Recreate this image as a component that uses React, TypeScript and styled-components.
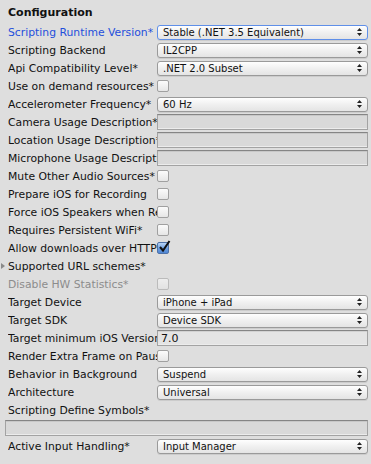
import React from "react";
import styled, { createGlobalStyle } from "styled-components";

const GlobalStyle = createGlobalStyle`
  body {
    margin: 0;
    background: #dedede;
    font-family: "DejaVu Sans", "Liberation Sans", sans-serif;
  }
`;

const Panel = styled.div`
  width: 371px;
  height: 464px;
  box-sizing: border-box;
  padding: 4px 3px 0 0;
  background: #dedede;
  overflow: hidden;
`;

const Title = styled.div`
  height: 18px;
  line-height: 18px;
  margin-bottom: 1px;
  padding-left: 8px;
  font-size: 11px;
  font-weight: bold;
  color: #111;
`;

const Row = styled.div`
  display: grid;
  grid-template-columns: 149px 1fr;
  align-items: center;
  height: 18px;
  padding-left: 8px;
  position: relative;
`;

const FullRow = styled.div`
  display: flex;
  align-items: center;
  height: 18px;
  padding-left: 5px;
`;

const Label = styled.div<{ $tone?: "focus" | "disabled" }>`
  font-size: 10.8px;
  white-space: nowrap;
  overflow: hidden;
  color: ${(p) =>
    p.$tone === "focus" ? "#1f4fdc" : p.$tone === "disabled" ? "#8c8c8c" : "#111"};
`;

const Foldout = styled.span`
  position: absolute;
  left: 1px;
  top: 6px;
  width: 0;
  height: 0;
  border-top: 3px solid transparent;
  border-bottom: 3px solid transparent;
  border-left: 4px solid #8a8a8a;
`;

const Select = styled.div<{ $focused?: boolean }>`
  height: 15px;
  box-sizing: border-box;
  display: flex;
  align-items: center;
  justify-content: space-between;
  padding: 0 5px;
  border: 1px solid ${(p) => (p.$focused ? "#5f8fe8" : "#9a9a9a")};
  border-radius: 3px;
  background: linear-gradient(#fefefe, #f0f0f0 50%, #e4e4e4);
  box-shadow: 0 1px 0 rgba(0, 0, 0, 0.08);
  font-size: 10px;
  color: #111;
`;

const Arrows = () => (
  <svg width="5" height="8" viewBox="0 0 5 8">
    <path d="M2.5 0 L5 3 L0 3 Z M0 5 L5 5 L2.5 8 Z" fill="#222" />
  </svg>
);

const TextField = styled.div<{ $light?: boolean }>`
  height: 16px;
  box-sizing: border-box;
  display: flex;
  align-items: center;
  padding-left: 3px;
  width: 100%;
  border: 1px solid #a3a3a3;
  border-top-color: #858585;
  background: ${(p) => (p.$light ? "#e4e4e4" : "#d9d9d9")};
  box-shadow: inset 0 1px 0 rgba(0, 0, 0, 0.08), inset 0 -1px 0 #ececec;
  font-size: 11px;
  color: #111;
`;

const Check = styled.div<{ $checked?: boolean; $disabled?: boolean }>`
  position: relative;
  width: 12px;
  height: 12px;
  box-sizing: border-box;
  border: 1px solid ${(p) => (p.$checked ? "#4f72a8" : "#a0a0a0")};
  border-radius: 2px;
  background: ${(p) =>
    p.$checked
      ? "linear-gradient(#b9d4f5, #6c9fe0 55%, #4f86d4)"
      : "linear-gradient(#fbfbfb, #e6e6e6)"};
  opacity: ${(p) => (p.$disabled ? 0.55 : 1)};
`;

const CheckMark = () => (
  <svg
    width="13"
    height="13"
    viewBox="0 0 13 13"
    style={{ position: "absolute", left: 0, top: -3 }}
  >
    <path d="M2 7 L5 10.5 L11.5 1" stroke="#111" strokeWidth="2" fill="none" />
  </svg>
);

type Item =
  | { kind: "select"; label: string; value: string; focused?: boolean }
  | { kind: "check"; label: string; checked?: boolean; disabled?: boolean }
  | { kind: "text"; label: string; value?: string; light?: boolean }
  | { kind: "label"; label: string; foldout?: boolean };

const items: Item[] = [
  { kind: "select", label: "Scripting Runtime Version*", value: "Stable (.NET 3.5 Equivalent)", focused: true },
  { kind: "select", label: "Scripting Backend", value: "IL2CPP" },
  { kind: "select", label: "Api Compatibility Level*", value: ".NET 2.0 Subset" },
  { kind: "check", label: "Use on demand resources*" },
  { kind: "select", label: "Accelerometer Frequency*", value: "60 Hz" },
  { kind: "text", label: "Camera Usage Description*" },
  { kind: "text", label: "Location Usage Description*" },
  { kind: "text", label: "Microphone Usage Description*" },
  { kind: "check", label: "Mute Other Audio Sources*" },
  { kind: "check", label: "Prepare iOS for Recording" },
  { kind: "check", label: "Force iOS Speakers when Recording" },
  { kind: "check", label: "Requires Persistent WiFi*" },
  { kind: "check", label: "Allow downloads over HTTP*", checked: true },
  { kind: "label", label: "Supported URL schemes*", foldout: true },
  { kind: "check", label: "Disable HW Statistics*", disabled: true },
  { kind: "select", label: "Target Device", value: "iPhone + iPad" },
  { kind: "select", label: "Target SDK", value: "Device SDK" },
  { kind: "text", label: "Target minimum iOS Version", value: "7.0", light: true },
  { kind: "check", label: "Render Extra Frame on Pause" },
  { kind: "select", label: "Behavior in Background", value: "Suspend" },
  { kind: "select", label: "Architecture", value: "Universal" },
  { kind: "label", label: "Scripting Define Symbols*" },
];

const renderControl = (item: Item) => {
  switch (item.kind) {
    case "select":
      return (
        <Select $focused={item.focused}>
          <span>{item.value}</span>
          <Arrows />
        </Select>
      );
    case "check":
      return (
        <Check $checked={item.checked} $disabled={item.disabled}>
          {item.checked && <CheckMark />}
        </Check>
      );
    case "text":
      return <TextField $light={item.light}>{item.value}</TextField>;
    default:
      return null;
  }
};

const App: React.FC = () => {
  return (
    <Panel>
      <GlobalStyle />
      <Title>Configuration</Title>
      {items.map((item) => (
        <Row key={item.label}>
          {item.kind === "label" && item.foldout && <Foldout />}
          <Label
            $tone={
              item.kind === "select" && item.focused
                ? "focus"
                : item.kind === "check" && item.disabled
                ? "disabled"
                : undefined
            }
          >
            {item.label}
          </Label>
          {renderControl(item)}
        </Row>
      ))}
      <FullRow>
        <TextField />
      </FullRow>
      <Row>
        <Label>Active Input Handling*</Label>
        <Select>
          <span>Input Manager</span>
          <Arrows />
        </Select>
      </Row>
    </Panel>
  );
};

export default App;
